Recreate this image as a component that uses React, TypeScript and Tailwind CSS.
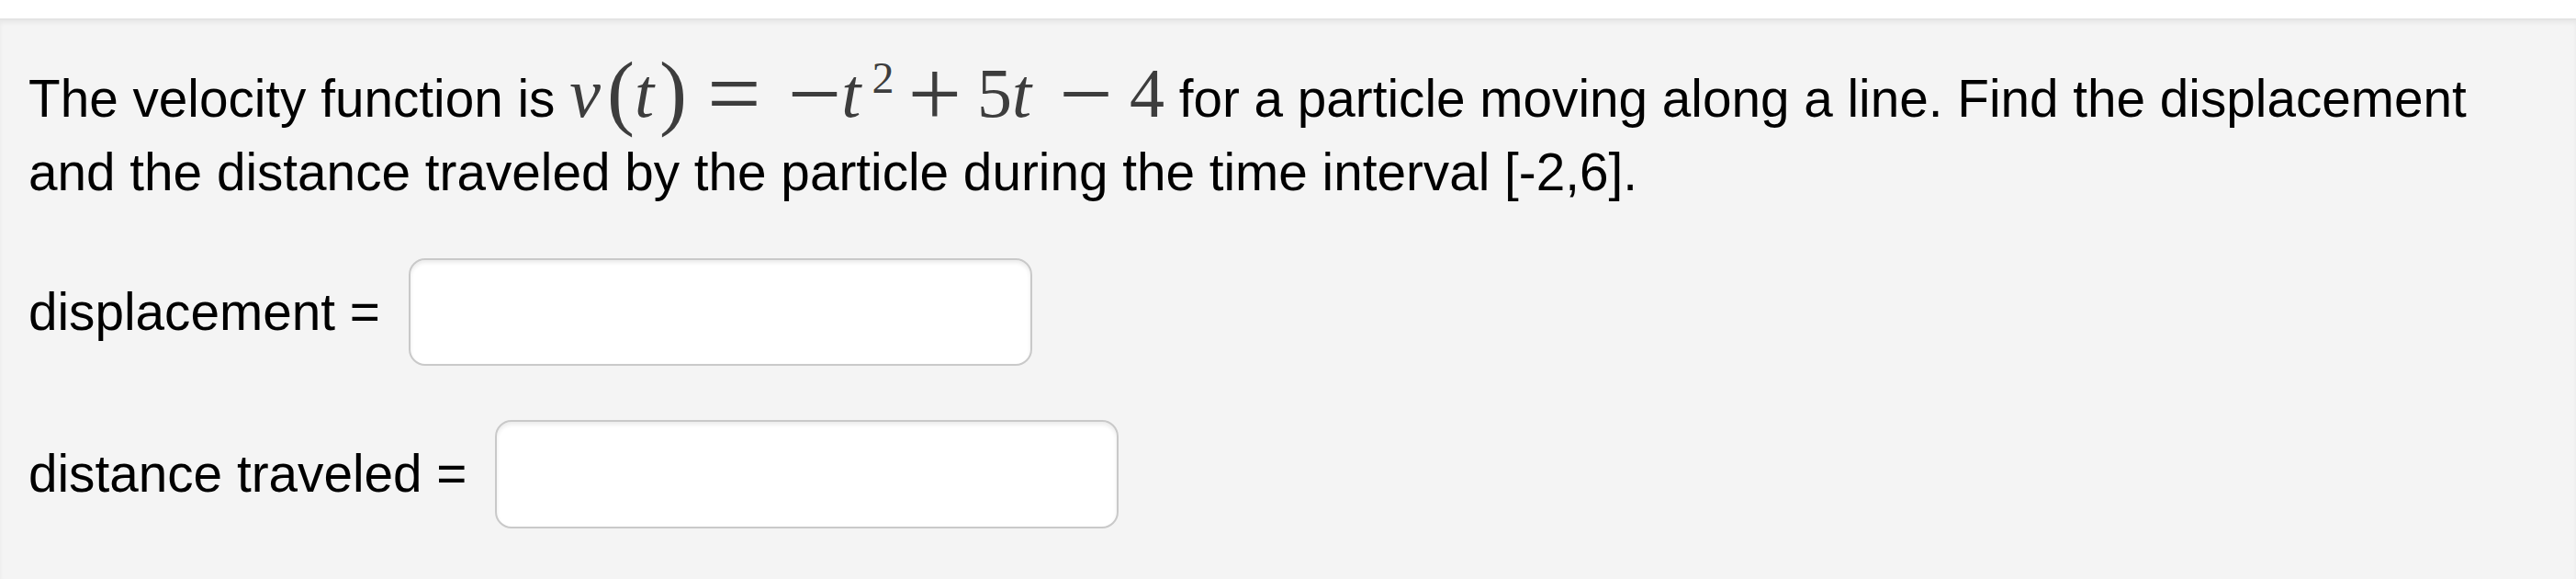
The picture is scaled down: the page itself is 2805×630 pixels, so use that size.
import React from 'react';

// math typeset by hand, roughly like KaTeX output
function MathExpr(): React.ReactNode {
  const op = "font-['Liberation_Serif',serif] text-[104px] align-[-10px]";
  return (
    <span className="font-['Liberation_Serif',serif] text-[76px] leading-[0] text-[#3d3d3d] whitespace-nowrap">
      <i>v</i>
      <span className="ml-[7px] text-[90px] align-[-3px]">(</span>
      <i>t</i>
      <span className="ml-[6px] text-[90px] align-[-3px]">)</span>
      <span className={`ml-[22px] ${op}`}>=</span>
      <span className={`ml-[29px] ${op}`}>−</span>
      <i>t</i>
      <span className="ml-[12px] text-[48px] align-[26px]">2</span>
      <span className={`ml-[15px] ${op}`}>+</span>
      <span className="ml-[17px]">5</span>
      <i>t</i>
      <span className={`ml-[30px] ${op}`}>−</span>
      <span className="ml-[18px]">4</span>
    </span>
  );
}

export default function App(): React.ReactNode {
  return (
    <div className="w-[2805px] h-[630px] bg-white font-['Liberation_Sans',Arial,sans-serif] text-black overflow-hidden">
      <div className="h-[20px] bg-white" />
      <div className="h-[610px] bg-[#f4f4f4] border-t-2 border-[#e4e4e4] shadow-[inset_0_3px_4px_rgba(0,0,0,0.05)] px-[31px] pt-[46px] flex flex-col">
        <p className="text-[56.7px] leading-[80px]">
          The velocity function is <MathExpr /> for a particle moving along a line. Find the displacement
          <br />
          and the distance traveled by the particle during the time interval [-2,6].
        </p>

        <div className="mt-[53px] flex flex-col gap-[59px]">
          <label className="flex items-center gap-[31px]">
            <span className="text-[56.7px] leading-[80px]">displacement =</span>
            <input
              type="text"
              className="w-[679px] h-[117px] bg-white rounded-[18px] border-2 border-[#c9c9c9] shadow-[inset_0_3px_4px_rgba(0,0,0,0.08)] outline-none"
            />
          </label>

          <label className="flex items-center gap-[31px]">
            <span className="text-[56.7px] leading-[80px]">distance traveled =</span>
            <input
              type="text"
              className="w-[679px] h-[118px] bg-white rounded-[18px] border-2 border-[#c9c9c9] shadow-[inset_0_3px_4px_rgba(0,0,0,0.08)] outline-none"
            />
          </label>
        </div>
      </div>
    </div>
  );
}
